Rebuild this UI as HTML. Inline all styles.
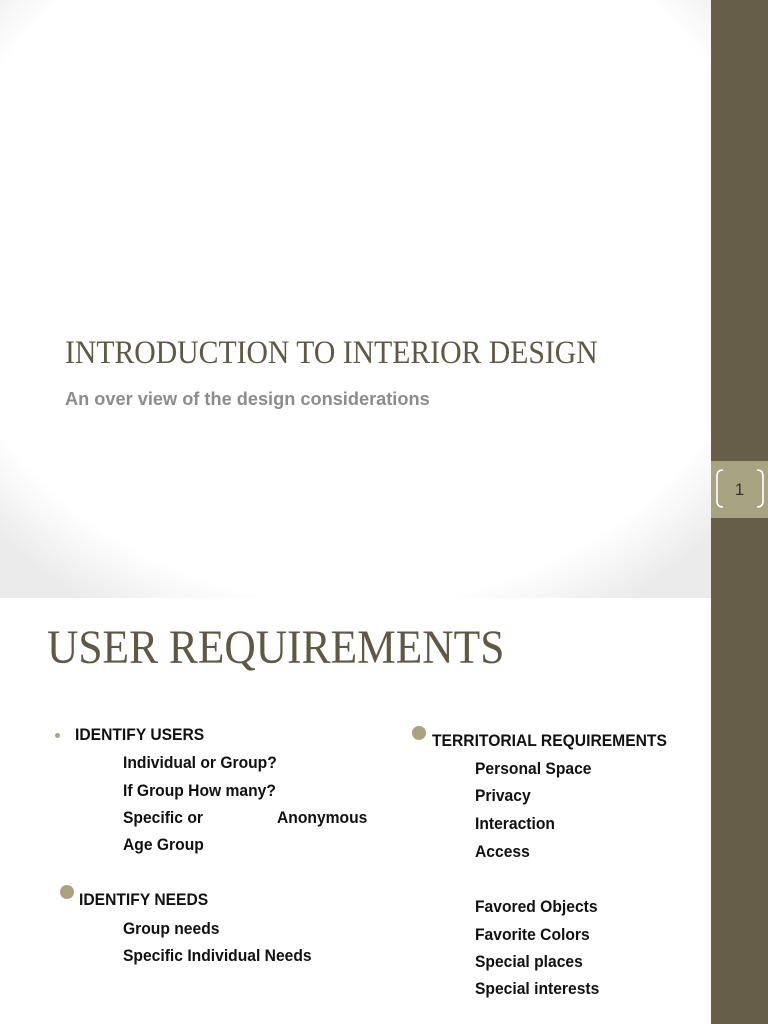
<!DOCTYPE html>
<html><head><meta charset="utf-8"><style>
html,body{margin:0;padding:0;width:768px;height:1024px;overflow:hidden;background:#fff;position:relative}
.s1{position:absolute;left:0;top:0;width:711px;height:600px;
background:radial-gradient(ellipse 490px 420px at 355px 250px,#fff 84%,#ebebeb 100%);}
.s2{position:absolute;left:0;top:598px;width:711px;height:426px;background:#fff}
.bar{position:absolute;left:711px;top:0;width:57px;height:1024px;background:#665e48}
.num{position:absolute;left:711px;top:461px;width:57px;height:57px;background:#a8a482}
.t{position:absolute;white-space:nowrap;transform-origin:0 0}
.serif{font-family:"Liberation Serif",serif;color:#5f5843}
.sans{font-family:"Liberation Sans",sans-serif;font-weight:bold;color:#111;font-size:17px;transform:scaleX(.92)}
.dot{position:absolute;border-radius:50%;background:#a8a482}
</style></head><body>
<div class="s1"></div>
<div class="s2"></div>
<div class="bar"></div>
<div class="num">
<svg width="57" height="57" style="position:absolute;left:0;top:0">
<path d="M12 9 Q6 9 6 15 L6 40 Q6 46 12 46" fill="none" stroke="#fff" stroke-width="1.6"/>
<path d="M46 9 Q52 9 52 15 L52 40 Q52 46 46 46" fill="none" stroke="#fff" stroke-width="1.6"/>
</svg>
<div style="position:absolute;left:0;width:57px;top:19px;text-align:center;font-family:'Liberation Sans',sans-serif;font-size:17px;color:#333">1</div>
</div>
<div class="t serif" style="left:65px;top:335px;font-size:33px;transform:scaleX(.9)">INTRODUCTION TO INTERIOR DESIGN</div>
<div class="t" style="left:65px;top:389px;font-family:'Liberation Sans',sans-serif;font-weight:bold;font-size:18px;color:#8c8c8c;transform:scaleX(1.01)">An over view of the design considerations</div>

<div class="t serif" style="left:47px;top:620px;font-size:48px;transform:scaleX(.905)">USER REQUIREMENTS</div>

<div class="dot" style="left:55px;top:733px;width:5px;height:5px"></div>
<div class="t sans" style="left:75px;top:725px">IDENTIFY USERS</div>
<div class="t sans" style="left:123px;top:753px">Individual or Group?</div>
<div class="t sans" style="left:123px;top:781px">If Group How many?</div>
<div class="t sans" style="left:123px;top:808px">Specific or</div>
<div class="t sans" style="left:277px;top:808px">Anonymous</div>
<div class="t sans" style="left:123px;top:835px">Age Group</div>
<div class="dot" style="left:60px;top:885px;width:14px;height:14px"></div>
<div class="t sans" style="left:79px;top:890px">IDENTIFY NEEDS</div>
<div class="t sans" style="left:123px;top:919px">Group needs</div>
<div class="t sans" style="left:123px;top:946px">Specific Individual Needs</div>

<div class="dot" style="left:412px;top:726px;width:14px;height:14px"></div>
<div class="t sans" style="left:432px;top:731px">TERRITORIAL REQUIREMENTS</div>
<div class="t sans" style="left:475px;top:759px">Personal Space</div>
<div class="t sans" style="left:475px;top:786px">Privacy</div>
<div class="t sans" style="left:475px;top:814px">Interaction</div>
<div class="t sans" style="left:475px;top:842px">Access</div>
<div class="t sans" style="left:475px;top:897px">Favored Objects</div>
<div class="t sans" style="left:475px;top:925px">Favorite Colors</div>
<div class="t sans" style="left:475px;top:952px">Special places</div>
<div class="t sans" style="left:475px;top:979px">Special interests</div>
</body></html>
